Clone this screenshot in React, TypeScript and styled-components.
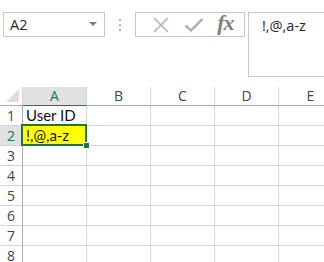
import React from "react";
import styled, { createGlobalStyle } from "styled-components";

const Global = createGlobalStyle`
  html, body { margin: 0; padding: 0; background: #ffffff; }
  body { font-family: "Open Sans", "Liberation Sans", sans-serif; overflow: hidden; }
`;

const Page = styled.div`
  width: 324px;
  height: 262px;
  overflow: hidden;
  background: #ffffff;
  display: flex;
  flex-direction: column;
`;

const FormulaBar = styled.div`
  height: 87px;
  flex: none;
  display: flex;
  align-items: flex-start;
  padding-top: 12px;
  box-sizing: border-box;
  & > * { flex: none; }
`;

const NameBox = styled.div`
  margin-left: 3px;
  width: 102px;
  height: 25px;
  box-sizing: border-box;
  border: 1px solid #c6c6c6;
  display: flex;
  align-items: center;
  justify-content: space-between;
  padding: 0 7px 0 6px;
  font-family: "Open Sans", "Liberation Sans", sans-serif;
  font-size: 14.5px;
  color: #262626;
`;

const Caret = styled.span`
  width: 0;
  height: 0;
  border-left: 4px solid transparent;
  border-right: 4px solid transparent;
  border-top: 4px solid #7a7a7a;
  margin-top: -2px;
`;

const Grip = styled.div`
  width: 30px;
  height: 25px;
  display: flex;
  flex-direction: column;
  align-items: center;
  justify-content: center;
  gap: 3px;
`;

const Dot = styled.span`
  width: 2px;
  height: 2px;
  background: #b5b5b5;
`;

const ButtonBox = styled.div`
  width: 110px;
  height: 25px;
  box-sizing: border-box;
  border: 1px solid #c6c6c6;
  display: flex;
  align-items: center;
  padding: 0 4px 0 8px;
`;

const IconSlot = styled.div<{ $w: number }>`
  width: ${(p) => p.$w}px;
  height: 23px;
  display: flex;
  align-items: center;
  justify-content: center;
`;

const Fx = styled.span`
  font-family: "Liberation Serif", "DejaVu Serif", serif;
  font-style: italic;
  font-weight: bold;
  font-size: 22px;
  color: #7f7f7f;
  letter-spacing: -1px;
  margin-top: -3px;
`;

const FormulaBox = styled.div`
  margin-left: 3px;
  width: 90px;
  height: 65px;
  box-sizing: border-box;
  border: 1px solid #c6c6c6;
  padding: 3px 0 0 13px;
  font-family: "Open Sans", "Liberation Sans", sans-serif;
  font-size: 14.5px;
  color: #262626;
`;

const Grid = styled.div`
  display: grid;
  grid-template-columns: 23px repeat(5, 64px);
  grid-template-rows: 19px repeat(8, 20px);
`;

const Corner = styled.div`
  box-sizing: border-box;
  border-right: 1px solid #d4d4d4;
  border-bottom: 1px solid #ababab;
  position: relative;
  background: #ffffff;
`;

const Triangle = styled.span`
  position: absolute;
  right: 3px;
  bottom: 3px;
  width: 0;
  height: 0;
  border-left: 13px solid transparent;
  border-bottom: 13px solid #dfdfdf;
`;

const ColHead = styled.div<{ $sel?: boolean }>`
  box-sizing: border-box;
  border-right: 1px solid #d4d4d4;
  border-bottom: 1px solid ${(p) => (p.$sel ? "#217346" : "#ababab")};
  background: ${(p) => (p.$sel ? "#e1e1e1" : "#ffffff")};
  color: ${(p) => (p.$sel ? "#217346" : "#444444")};
  font-family: "Open Sans", "Liberation Sans", sans-serif;
  font-size: 14px;
  display: flex;
  align-items: center;
  justify-content: center;
  line-height: 1;
`;

const RowHead = styled.div<{ $sel?: boolean }>`
  box-sizing: border-box;
  border-right: 1px solid ${(p) => (p.$sel ? "#217346" : "#ababab")};
  border-bottom: 1px solid #d4d4d4;
  background: ${(p) => (p.$sel ? "#e1e1e1" : "#ffffff")};
  color: ${(p) => (p.$sel ? "#217346" : "#444444")};
  font-family: "Open Sans", "Liberation Sans", sans-serif;
  font-size: 14px;
  display: flex;
  align-items: center;
  justify-content: center;
  line-height: 1;
`;

const Cell = styled.div<{ $sel?: boolean }>`
  box-sizing: border-box;
  position: relative;
  border-right: 1px solid #d4d4d4;
  border-bottom: 1px solid #d4d4d4;
  font-family: "Lato", "Liberation Sans", sans-serif;
  font-size: 15px;
  color: #111111;
  display: flex;
  align-items: flex-end;
  padding: 0 0 1px 3px;
  white-space: nowrap;
  background: ${(p) => (p.$sel ? "#ffff00" : "#ffffff")};
`;

const SelBorder = styled.span`
  position: absolute;
  left: -2px;
  top: -2px;
  right: -1px;
  bottom: -1px;
  border: 2px solid #217346;
  pointer-events: none;
`;

const Handle = styled.span`
  position: absolute;
  right: -4px;
  bottom: -4px;
  width: 5px;
  height: 5px;
  background: #217346;
  border: 1px solid #ffffff;
  z-index: 2;
`;

const cols = ["A", "B", "C", "D", "E"];
const data: Record<string, string> = { A1: "User ID", A2: "!,@,a-z" };

export default function App() {
  return (
    <Page>
      <Global />
      <FormulaBar>
        <NameBox>
          <span>A2</span>
          <Caret />
        </NameBox>
        <Grip>
          <Dot />
          <Dot />
          <Dot />
        </Grip>
        <ButtonBox>
          <IconSlot $w={34}>
            <svg width="18" height="18" viewBox="0 0 18 18">
              <path d="M2 2 L16 16 M16 2 L2 16" stroke="#b3b3b3" strokeWidth="1.6" fill="none" />
            </svg>
          </IconSlot>
          <IconSlot $w={34}>
            <svg width="20" height="16" viewBox="0 0 20 16">
              <path d="M1.5 8.5 L7 13.5 L18.5 2" stroke="#b3b3b3" strokeWidth="2.6" fill="none" strokeLinejoin="miter" />
            </svg>
          </IconSlot>
          <IconSlot $w={30}>
            <Fx>fx</Fx>
          </IconSlot>
        </ButtonBox>
        <FormulaBox>!,@,a-z</FormulaBox>
      </FormulaBar>
      <Grid>
        <Corner>
          <Triangle />
        </Corner>
        {cols.map((c) => (
          <ColHead key={c} $sel={c === "A"}>
            {c}
          </ColHead>
        ))}
        {Array.from({ length: 8 }, (_, i) => i + 1).map((r) => (
          <React.Fragment key={r}>
            <RowHead $sel={r === 2}>{r}</RowHead>
            {cols.map((c) => {
              const id = c + r;
              const sel = id === "A2";
              return (
                <Cell key={id} $sel={sel}>
                  {data[id] ?? ""}
                  {sel && <SelBorder />}
                  {sel && <Handle />}
                </Cell>
              );
            })}
          </React.Fragment>
        ))}
      </Grid>
    </Page>
  );
}
